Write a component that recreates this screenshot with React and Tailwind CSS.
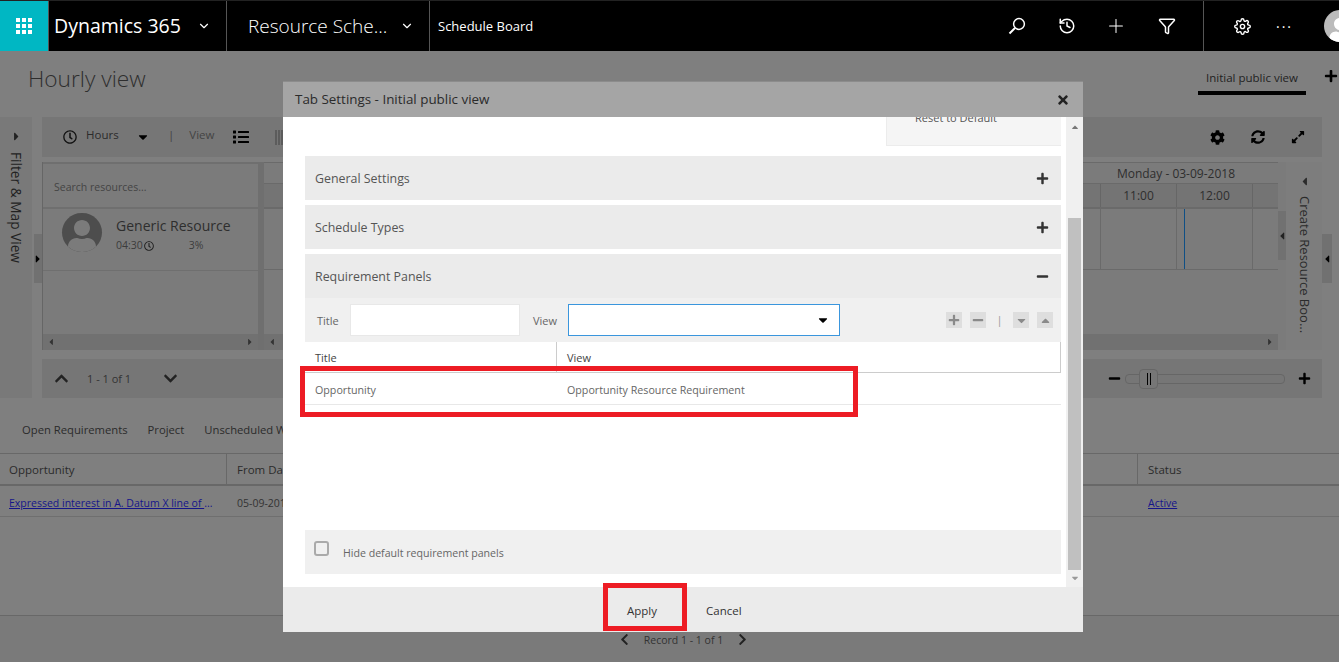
import { ChevronDown, History, Plus, Funnel } from "lucide-react";
import { FiSettings } from "react-icons/fi";
import {
  FaCaretDown,
  FaCaretLeft,
  FaCaretRight,
  FaCaretUp,
  FaChevronDown,
  FaChevronLeft,
  FaChevronRight,
  FaChevronUp,
  FaCog,
  FaExpandAlt,
  FaList,
  FaMinus,
  FaPlus,
  FaRegClock,
  FaSyncAlt,
  FaTimes,
  FaUser,
} from "react-icons/fa";

function TopBar() {
  return (
    <div className="flex h-[51px] bg-black text-white border-t border-[#222]">
      <div className="flex w-[48px] items-center justify-center bg-[#00b7c3]">
        <div className="grid grid-cols-3 gap-[2px]">
          {[0, 1, 2, 3, 4, 5, 6, 7, 8].map((i) => (
            <div key={i} className="h-[4px] w-[4px] bg-white" />
          ))}
        </div>
      </div>
      <div className="flex w-[178px] items-center border-l border-[#555] pl-[5px]">
        <span className="w-[143px] text-[19.5px] leading-none whitespace-nowrap">Dynamics 365</span>
        <ChevronDown size={14} />
      </div>
      <div className="flex w-[203px] items-center border-l border-[#555] pl-[21px]">
        <span className="w-[152px] text-[19px] font-light leading-none whitespace-nowrap">Resource Sche...</span>
        <ChevronDown size={14} />
      </div>
      <div className="flex w-[774px] items-center border-l border-[#555] pl-[8px]">
        <span className="mt-[1px] w-[570px] text-[13px] whitespace-nowrap">Schedule Board</span>
        <div className="flex items-center">
          <svg width="18" height="18" viewBox="0 0 18 18" fill="none" stroke="currentColor" strokeWidth="1.5">
            <circle cx="11" cy="7" r="5.4" />
            <path d="M7 11 L1.5 16.5" strokeWidth="2" />
          </svg>
          <History size={18} className="ml-[32px]" />
          <Plus size={22} strokeWidth={1.1} className="ml-[29px]" />
          <Funnel size={18} className="ml-[31px]" />
        </div>
      </div>
      <div className="flex flex-1 items-center overflow-hidden border-l border-[#555] pl-[30px]">
        <FiSettings size={17} className="shrink-0 text-white" />
        <span className="ml-[25px] mb-[6px] shrink-0 text-[14px] leading-none tracking-[2px]">...</span>
        <div className="ml-[31px] flex h-[32px] w-[32px] shrink-0 items-end justify-center overflow-hidden rounded-full bg-[#bbb]">
          <FaUser size={24} className="text-white" />
        </div>
      </div>
    </div>
  );
}

function TitleRow() {
  return (
    <div className="flex h-[66px] text-[#333]">
      <div className="pl-[28px] pt-[12px] text-[22.7px] font-light leading-[32px] text-[#2e2e2e]">Hourly view</div>
      <div className="ml-auto mt-[17px] h-[27px] w-[108px] border-b-[4px] border-black text-center text-[11.5px] leading-[20px] text-[#222]">
        Initial public view
      </div>
      <div className="flex w-[33px] justify-end pr-px pt-[18px]">
        <FaPlus size={14} className="text-black" />
      </div>
    </div>
  );
}

function Toolbar() {
  return (
    <div className="flex h-[40px] items-center bg-[#767676] pl-[21px] pr-[17px] text-[11.5px] text-[#2b2b2b]">
      <FaRegClock size={14} className="text-[#111]" />
      <span className="ml-[9px] mb-[4px] w-[50px]">Hours</span>
      <FaCaretDown size={14} className="text-black" />
      <span className="ml-[18px] mb-[4px] text-[#444]">|</span>
      <span className="ml-[15px] mb-[4px] w-[44px] text-[#444]">View</span>
      <FaList size={16} className="text-black" />
      {/* second view toggle, hidden behind the dialog apart from its edge */}
      <div className="ml-[26px] flex gap-px">
        <div className="h-[15px] w-[2px] bg-[#5c5c5c]" />
        <div className="h-[15px] w-[2px] bg-[#5c5c5c]" />
        <div className="h-[15px] w-[2px] bg-[#5c5c5c]" />
      </div>
      <div className="ml-auto flex items-center gap-[26px] text-black">
        <FaCog size={15} />
        <FaSyncAlt size={14} />
        <FaExpandAlt size={14} />
      </div>
    </div>
  );
}

function ScrollRow({ children }) {
  return <div className="mt-auto flex h-[16px] items-center justify-between bg-[#717171] px-[3px] text-[#333]">{children}</div>;
}

function ResourcePanel() {
  return (
    <div className="flex w-[216px] flex-col border-l border-[#666] bg-[#7b7b7b]">
      <div className="flex h-[47px] items-center border-y-2 border-[#6f6f6f] pl-[11px] pt-[4px] text-[10.5px] text-[#444]">
        Search resources...
      </div>
      <div className="flex h-[62px] border-b border-[#6f6f6f] pl-[19px] pt-[4px]">
        <div className="flex h-[39px] w-[40px] items-end justify-center overflow-hidden rounded-full bg-[#4d4d4d]">
          <FaUser size={32} className="text-[#7b7b7b]" />
        </div>
        <div className="pl-[14px] pt-[2px]">
          <div className="text-[14px] leading-[22px] text-[#2e2e2e]">Generic Resource</div>
          <div className="mt-[1px] flex items-center text-[10.5px] text-[#3c3c3c]">
            04:30
            <FaRegClock size={10} className="ml-[1px] text-[#222]" />
            <span className="ml-[35px]">3%</span>
          </div>
        </div>
      </div>
      <ScrollRow>
        <FaCaretLeft size={10} />
        <FaCaretRight size={10} />
      </ScrollRow>
    </div>
  );
}

function TimelinePanel() {
  return (
    <div className="flex flex-1 flex-col border-l-[6px] border-[#6f6f6f] bg-[#7b7b7b]">
      <div className="flex h-[22px] items-center justify-end border-y border-[#6a6a6a] pr-[43px] pt-px text-[12px] text-[#2e2e2e]">
        Monday - 03-09-2018
      </div>
      <div className="flex h-[25px] justify-end border-b-2 border-[#6a6a6a] bg-[#747474] text-[12px] text-[#2e2e2e]">
        {["11:00", "12:00", ""].map((t, i) => (
          <div key={i} className={"flex items-center justify-center border-l border-[#666] " + (i === 2 ? "w-[26px]" : "w-[76px]")}>
            {t}
          </div>
        ))}
      </div>
      <div className="flex h-[61px] justify-end border-b border-[#6a6a6a]">
        <div className="w-[76px] border-l border-[#6a6a6a]" />
        <div className="w-[76px] border-l border-[#6a6a6a] pl-[7px]">
          <div className="h-full w-px bg-[#0f4f85]" />
        </div>
        <div className="w-[26px] border-l border-[#6a6a6a]" />
      </div>
      <ScrollRow>
        <FaCaretLeft size={10} />
        <FaCaretRight size={10} />
      </ScrollRow>
    </div>
  );
}

function CreatePanel() {
  return (
    <>
      <div className="flex h-full w-[8px] flex-col bg-[#7b7b7b]">
        <div className="mt-[49px] flex h-[49px] items-center justify-center bg-[#717171] text-[#222]">
          <FaCaretLeft size={12} className="shrink-0" />
        </div>
      </div>
      <div className="flex w-[36px] flex-col items-center bg-[#7d7d7d] pt-[13px] text-[#2b2b2b]">
        <FaCaretLeft size={13} />
        <div className="mt-[8px] text-[13px] leading-none whitespace-nowrap [writing-mode:vertical-rl]">Create Resource Boo...</div>
      </div>
    </>
  );
}

function Schedule() {
  return (
    <div className="flex h-[281px]">
      <div className="flex w-[32px] flex-col items-center bg-[#797979] pt-[13px] text-[#222]">
        <FaCaretRight size={13} />
        <div className="mt-[9px] text-[13.7px] leading-none whitespace-nowrap [writing-mode:vertical-rl]">Filter &amp; Map View</div>
      </div>
      <div className="w-[10px]">
        <div className="ml-[2px] mt-[117px] flex h-[49px] items-center justify-center bg-[#717171] text-black">
          <FaCaretRight size={12} className="shrink-0" />
        </div>
      </div>
      <div className="flex w-[1280px] flex-col">
        <Toolbar />
        <div className="mt-[5px] flex h-[188px]">
          <ResourcePanel />
          <TimelinePanel />
          <CreatePanel />
        </div>
        <div className="mt-[9px] flex h-[39px] items-center bg-[#767676] pl-[12px] text-[11px] text-[#333]">
          <FaChevronUp size={15} className="text-[#222]" />
          <span className="ml-[18px] mt-[2px] w-[76px]">1 - 1 of 1</span>
          <FaChevronDown size={15} className="text-[#222]" />
          <div className="ml-auto flex items-center pr-[11px]">
            <FaMinus size={13} className="text-black" />
            <div className="relative ml-[4px] h-[10px] w-[160px] rounded-sm border border-[#666]">
              <div className="absolute left-[13px] -top-[6px] flex h-[20px] w-[19px] items-center justify-center gap-[2px] rounded-sm border border-[#666] bg-[#767676]">
                <div className="h-[12px] w-px bg-black" />
                <div className="h-[12px] w-px bg-black" />
              </div>
            </div>
            <FaPlus size={13} className="ml-[13px] text-black" />
          </div>
        </div>
      </div>
      <div className="w-[17px]">
        <div className="mt-[117px] flex h-[49px] w-[10px] items-center justify-center bg-[#717171] text-black">
          <FaCaretLeft size={12} className="shrink-0" />
        </div>
      </div>
    </div>
  );
}

function Requirements() {
  return (
    <div className="mt-[9px] text-[11.5px] text-[#2b2b2b]">
      <div className="flex h-[46px] items-center gap-[20px] pl-[22px] text-[11.25px]">
        <span>Open Requirements</span>
        <span>Project</span>
        <span>Unscheduled Work</span>
      </div>
      <div className="flex h-[33px] items-center border-y border-[#686868] border-b-2">
        <div className="flex h-full w-[227px] items-center border-r border-[#686868] pl-[9px] pt-[1px]">Opportunity</div>
        <div className="flex h-full w-[911px] items-center border-r border-[#686868] pl-[10px] pt-[1px]">From Date</div>
        <div className="pl-[10px] pt-[1px]">Status</div>
      </div>
      <div className="flex h-[31px] items-center border-b border-[#6f6f6f] pt-[5px] text-[10.5px]">
        <div className="w-[227px] whitespace-nowrap pl-[9px] text-[#15158a]">
          <span className="underline">Expressed interest in A. Datum X line of </span>...
        </div>
        <div className="w-[911px] pl-[10px] text-[#333]">05-09-2018</div>
        <div className="pl-[10px] text-[#15158a] underline">Active</div>
      </div>
      <div className="h-[99px] border-b border-[#686868]" />
      <div className="flex h-[46px] items-start justify-center gap-[13px] bg-[#7a7a7a] pl-[28px] pt-[16px] text-[#333]">
        <FaChevronLeft size={13} className="mt-[1px] text-[#222]" />
        <span className="text-[10.5px] leading-[16px]">Record 1 - 1 of 1</span>
        <FaChevronRight size={13} className="mt-[1px] text-[#222]" />
      </div>
    </div>
  );
}

function Section({ title, open }) {
  return (
    <div className="flex h-[44px] items-center justify-between bg-[#ebebeb] pl-[10px] pr-[12px] text-[12.4px] text-[#555]">
      <span className="mt-[2px]">{title}</span>
      {open ? <FaMinus size={13} className="text-[#333]" /> : <FaPlus size={13} className="text-[#333]" />}
    </div>
  );
}

function SmallButton({ children }) {
  return <div className="flex h-[16px] w-[16px] items-center justify-center bg-[#dedede] text-[#8a8a8a]">{children}</div>;
}

function PanelsEditor() {
  return (
    <>
      <div className="flex h-[44px] items-center bg-[#f0f0f0] pl-[12px] pr-[8px] text-[11px] text-[#666]">
        <span className="mt-[2px] w-[33px]">Title</span>
        <div className="h-[32px] w-[170px] border border-[#e8e8e8] bg-white" />
        <span className="ml-[13px] mt-[2px] w-[35px]">View</span>
        <div className="flex h-[32px] w-[272px] items-center justify-end border border-[#3a96dd] bg-white pr-[9px] text-black">
          <FaCaretDown size={14} />
        </div>
        <div className="ml-auto flex items-center">
          <SmallButton><FaPlus size={12} /></SmallButton>
          <div className="ml-[8px]"><SmallButton><FaMinus size={12} /></SmallButton></div>
          <div className="w-[27px] text-center text-[#999]">|</div>
          <SmallButton><FaCaretDown size={13} /></SmallButton>
          <div className="ml-[8px]"><SmallButton><FaCaretUp size={13} /></SmallButton></div>
        </div>
      </div>
      <div className="flex h-[31px] items-center border-b border-r border-[#ccc] text-[11px] text-[#444]">
        <div className="flex h-full w-[252px] items-center border-r border-[#ccc] pl-[10px] pt-[2px]">Title</div>
        <div className="pl-[10px] pt-[2px]">View</div>
      </div>
      <div className="flex h-[32px] items-center border-b border-[#e8e8e8] pt-[3px] text-[10.7px] text-[#666]">
        <div className="w-[252px] pl-[10px]">Opportunity</div>
        <div className="pl-[10px]">Opportunity Resource Requirement</div>
      </div>
    </>
  );
}

function Dialog() {
  return (
    <div className="absolute left-[283px] top-[81px] flex h-[551px] w-[800px] flex-col">
      <div className="flex h-[36px] items-center justify-between border-t border-[#8c8c8c] bg-[#a5a5a5] pl-[12px] pr-[13px] text-[13.4px] text-[#2b2b2b]">
        Tab Settings - Initial public view
        <FaTimes size={14} className="text-[#222]" />
      </div>
      <div className="flex h-[470px] bg-white">
        <div className="w-[783px] pl-[22px] pr-[5px]">
          <div className="ml-auto h-[29px] w-[175px] overflow-hidden border-b border-l border-[#ececec] bg-[#f5f5f5] pl-[28px] text-[11px] leading-none text-[#555]">
            <div className="-mt-[5px]">Reset to Default</div>
          </div>
          <div className="mt-[10px] flex flex-col gap-[5px]">
            <Section title="General Settings" />
            <Section title="Schedule Types" />
          </div>
          <div className="mt-[5px]">
            <Section title="Requirement Panels" open />
            <PanelsEditor />
          </div>
          <div className="mt-[125px] flex h-[44px] items-center bg-[#f0f0f0] pl-[9px] text-[10.6px] text-[#666]">
            <div className="mb-[7px] h-[15px] w-[15px] rounded-[3px] border-2 border-[#aaa] bg-[#f0f0f0]" />
            <span className="ml-[14px] mt-[3px]">Hide default requirement panels</span>
          </div>
        </div>
        <div className="flex w-[17px] flex-col items-center bg-[#f0f0f0] text-[#777]">
          <FaCaretUp size={10} className="mt-[5px]" />
          <div className="mt-[86px] h-[352px] w-[13px] bg-[#c0c0c0]" />
          <FaCaretDown size={10} className="mt-[3px] text-[#999]" />
        </div>
      </div>
      <div className="flex h-[45px] items-center bg-[#ebebeb] pl-[344px] pt-[3px] text-[11.5px] text-[#333]">
        <span>Apply</span>
        <span className="ml-[49px]">Cancel</span>
      </div>
    </div>
  );
}

export default function App() {
  return (
    <div className="relative h-[662px] w-[1339px] overflow-hidden bg-[#7f7f7f] font-['Open_Sans','Noto_Sans',sans-serif]">
      <TopBar />
      <TitleRow />
      <Schedule />
      <Requirements />
      <Dialog />
      {/* red callouts drawn over the screenshot */}
      <div className="absolute left-[300px] top-[366px] h-[51px] w-[558px] border-[5px] border-[#ed1c24]" />
      <div className="absolute left-[603px] top-[583px] h-[48px] w-[84px] border-[5px] border-[#ed1c24]" />
    </div>
  );
}
